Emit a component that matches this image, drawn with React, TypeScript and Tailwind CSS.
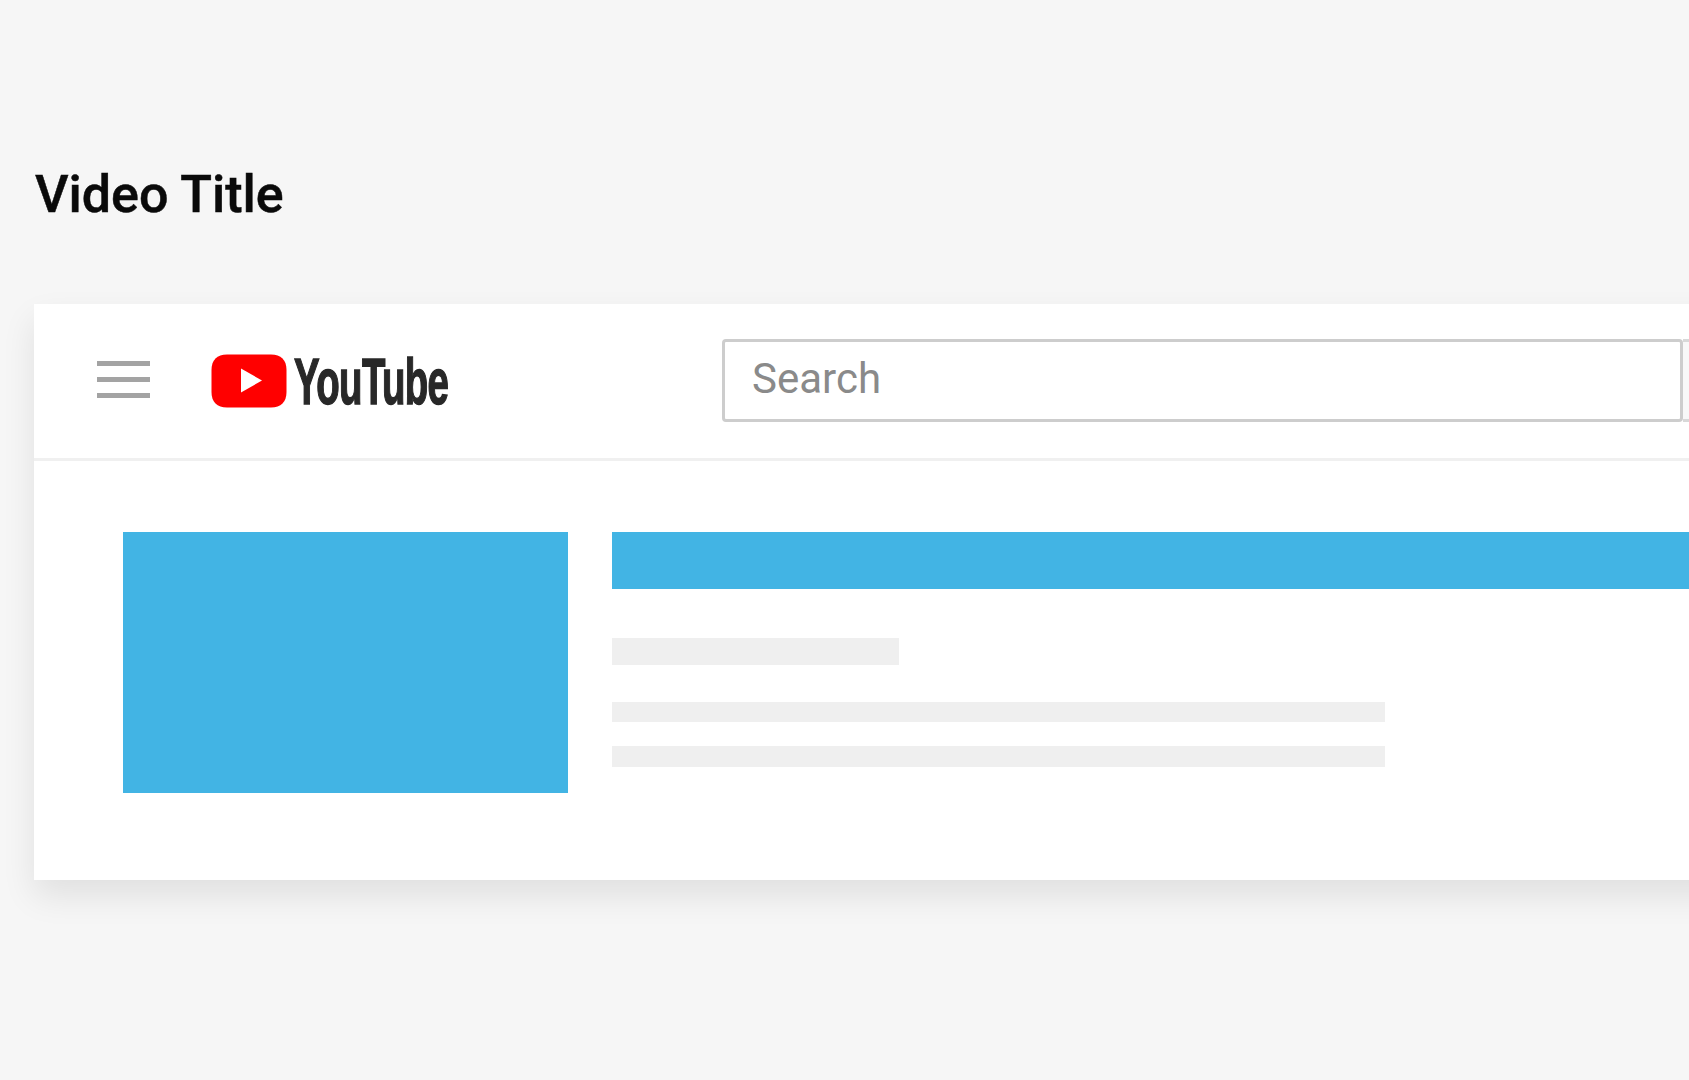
import React from 'react';

const YouTubeLogo = () => (
  <div className="flex items-center">
    <svg width="76" height="54" viewBox="0 0 76 54" className="shrink-0">
      <path d="M16 0.5H60C70 0.5 75.5 6 75.5 16V38C75.5 48 70 53.5 60 53.5H16C6 53.5 0.5 48 0.5 38V16C0.5 6 6 0.5 16 0.5Z" fill="#ff0000" />
      <path d="M30 14.5L51 26.5L30 38.5Z" fill="#ffffff" />
    </svg>
    <span className="mt-px ml-[7px] origin-left scale-x-[0.6] font-['Liberation_Sans',sans-serif] text-[64px] leading-none font-bold tracking-[-1px] text-[#282828] [-webkit-text-stroke:1.5px_#282828]">
      YouTube
    </span>
  </div>
);

const App = () => {
  return (
    <div className="h-[1080px] w-full overflow-hidden bg-[#f6f6f6] font-['Roboto',sans-serif]">
      <h1 className="pt-[165px] pl-[35px] text-[52px] leading-[60px] font-medium text-[#0a0a0a] [-webkit-text-stroke:0.5px_#0a0a0a]">Video Title</h1>
      <div className="mt-[79px] ml-[34px] h-[576px] w-[1800px] bg-white shadow-[0_16px_32px_rgba(0,0,0,0.09)]">
        <header className="flex h-[157px] items-center border-b-[3px] border-[#f0f0f0] pl-[63px]">
          <div className="mb-[3px] flex w-[53px] flex-col gap-[11px]">
            <div className="h-[5px] bg-[#a3a3a3]" />
            <div className="h-[5px] bg-[#a3a3a3]" />
            <div className="h-[5px] bg-[#a3a3a3]" />
          </div>
          <div className="ml-[61px] w-[511px]">
            <YouTubeLogo />
          </div>
          <div className="mb-[2px] flex h-[83px] w-[961px] items-center rounded-[4px] border-[3px] border-[#cdcdcd] bg-white pb-[3px] pl-[27px] text-[42px] text-[#8a8a8a]">
            Search
          </div>
          <div className="mb-[2px] h-[83px] flex-1 border-y-[3px] border-[#d8d8d8] bg-[#f8f8f8]" />
        </header>
        <section className="flex gap-[44px] pt-[71px] pl-[89px]">
          <div className="h-[261px] w-[445px] bg-[#42b4e4]" />
          <div className="flex-1">
            <div className="h-[57px] bg-[#42b4e4]" />
            <div className="mt-[49px] h-[27px] w-[287px] bg-[#efefef]" />
            <div className="mt-[37px] h-[20px] w-[773px] bg-[#efefef]" />
            <div className="mt-[24px] h-[21px] w-[773px] bg-[#efefef]" />
          </div>
        </section>
      </div>
    </div>
  );
};

export default App;
